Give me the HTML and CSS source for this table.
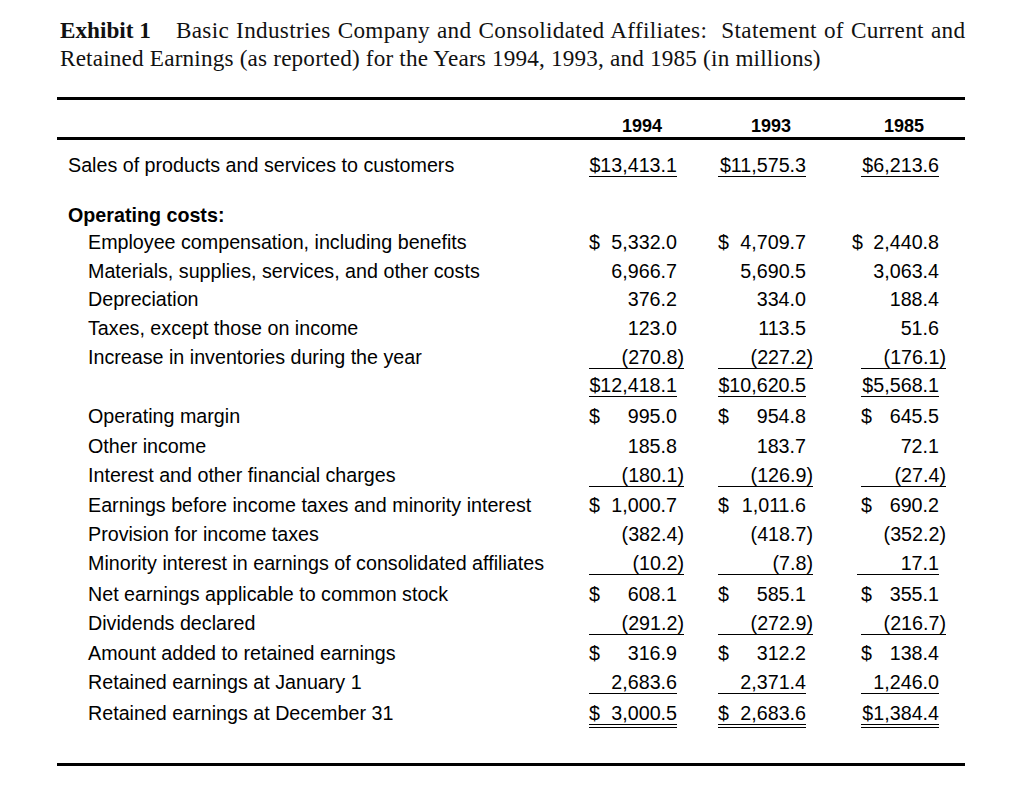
FILE: index.html
```html
<!DOCTYPE html>
<html lang="en">
<head>
<meta charset="utf-8">
<title>Exhibit 1</title>
<link rel="stylesheet" href="styles.css">
</head>
<body>
<div class="page">
  <h1 class="title"><span class="ex">Exhibit 1</span><span class="l1">Basic Industries Company and Consolidated Affiliates:&nbsp; Statement of Current and</span><br><span class="l2">Retained Earnings (as reported) for the Years 1994, 1993, and 1985 (in millions)</span></h1>

  <div class="table">
    <div class="row head">
      <div class="lab"></div>
      <div class="yr">1994</div>
      <div class="yr">1993</div>
      <div class="yr">1985</div>
    </div>

    <div class="body">
      <div class="row h50">
        <div class="lab">Sales of products and services to customers</div>
        <div class="cell c1"><span class="amt pos u"><span class="n">$13,413.1</span></span></div>
        <div class="cell c2"><span class="amt pos u"><span class="n">$11,575.3</span></span></div>
        <div class="cell c3"><span class="amt pos u"><span class="n">$6,213.6</span></span></div>
      </div>

      <div class="row h27">
        <div class="lab sec">Operating costs:</div>
      </div>

      <div class="row h29">
        <div class="lab ind">Employee compensation, including benefits</div>
        <div class="cell c1"><span class="amt pos"><span class="d">$</span><span class="n">5,332.0</span></span></div>
        <div class="cell c2"><span class="amt pos"><span class="d">$</span><span class="n">4,709.7</span></span></div>
        <div class="cell c3"><span class="amt pos"><span class="d out">$</span><span class="n">2,440.8</span></span></div>
      </div>
      <div class="row h28">
        <div class="lab ind">Materials, supplies, services, and other costs</div>
        <div class="cell c1"><span class="amt pos"><span class="n">6,966.7</span></span></div>
        <div class="cell c2"><span class="amt pos"><span class="n">5,690.5</span></span></div>
        <div class="cell c3"><span class="amt pos"><span class="n">3,063.4</span></span></div>
      </div>
      <div class="row h29">
        <div class="lab ind">Depreciation</div>
        <div class="cell c1"><span class="amt pos"><span class="n">376.2</span></span></div>
        <div class="cell c2"><span class="amt pos"><span class="n">334.0</span></span></div>
        <div class="cell c3"><span class="amt pos"><span class="n">188.4</span></span></div>
      </div>
      <div class="row h29">
        <div class="lab ind">Taxes, except those on income</div>
        <div class="cell c1"><span class="amt pos"><span class="n">123.0</span></span></div>
        <div class="cell c2"><span class="amt pos"><span class="n">113.5</span></span></div>
        <div class="cell c3"><span class="amt pos"><span class="n">51.6</span></span></div>
      </div>
      <div class="row h29">
        <div class="lab ind">Increase in inventories during the year</div>
        <div class="cell c1"><span class="amt u"><span class="n">(270.8)</span></span></div>
        <div class="cell c2"><span class="amt u"><span class="n">(227.2)</span></span></div>
        <div class="cell c3"><span class="amt u"><span class="n">(176.1)</span></span></div>
      </div>
      <div class="row h30">
        <div class="lab ind"></div>
        <div class="cell c1"><span class="amt pos u"><span class="n">$12,418.1</span></span></div>
        <div class="cell c2"><span class="amt pos u"><span class="n">$10,620.5</span></span></div>
        <div class="cell c3"><span class="amt pos u"><span class="n">$5,568.1</span></span></div>
      </div>
      <div class="row h30">
        <div class="lab ind">Operating margin</div>
        <div class="cell c1"><span class="amt pos"><span class="d">$</span><span class="n">995.0</span></span></div>
        <div class="cell c2"><span class="amt pos"><span class="d">$</span><span class="n">954.8</span></span></div>
        <div class="cell c3"><span class="amt pos"><span class="d">$</span><span class="n">645.5</span></span></div>
      </div>
      <div class="row h29">
        <div class="lab ind">Other income</div>
        <div class="cell c1"><span class="amt pos"><span class="n">185.8</span></span></div>
        <div class="cell c2"><span class="amt pos"><span class="n">183.7</span></span></div>
        <div class="cell c3"><span class="amt pos"><span class="n">72.1</span></span></div>
      </div>
      <div class="row h30">
        <div class="lab ind">Interest and other financial charges</div>
        <div class="cell c1"><span class="amt u"><span class="n">(180.1)</span></span></div>
        <div class="cell c2"><span class="amt u"><span class="n">(126.9)</span></span></div>
        <div class="cell c3"><span class="amt u"><span class="n">(27.4)</span></span></div>
      </div>
      <div class="row h29">
        <div class="lab ind">Earnings before income taxes and minority interest</div>
        <div class="cell c1"><span class="amt pos"><span class="d">$</span><span class="n">1,000.7</span></span></div>
        <div class="cell c2"><span class="amt pos"><span class="d">$</span><span class="n">1,011.6</span></span></div>
        <div class="cell c3"><span class="amt pos"><span class="d">$</span><span class="n">690.2</span></span></div>
      </div>
      <div class="row h29">
        <div class="lab ind">Provision for income taxes</div>
        <div class="cell c1"><span class="amt"><span class="n">(382.4)</span></span></div>
        <div class="cell c2"><span class="amt"><span class="n">(418.7)</span></span></div>
        <div class="cell c3"><span class="amt"><span class="n">(352.2)</span></span></div>
      </div>
      <div class="row h31">
        <div class="lab ind">Minority interest in earnings of consolidated affiliates</div>
        <div class="cell c1"><span class="amt u"><span class="n">(10.2)</span></span></div>
        <div class="cell c2"><span class="amt u"><span class="n">(7.8)</span></span></div>
        <div class="cell c3"><span class="amt pos u wide"><span class="n">17.1</span></span></div>
      </div>
      <div class="row h29">
        <div class="lab ind">Net earnings applicable to common stock</div>
        <div class="cell c1"><span class="amt pos"><span class="d">$</span><span class="n">608.1</span></span></div>
        <div class="cell c2"><span class="amt pos"><span class="d">$</span><span class="n">585.1</span></span></div>
        <div class="cell c3"><span class="amt pos"><span class="d">$</span><span class="n">355.1</span></span></div>
      </div>
      <div class="row h30">
        <div class="lab ind">Dividends declared</div>
        <div class="cell c1"><span class="amt u"><span class="n">(291.2)</span></span></div>
        <div class="cell c2"><span class="amt u"><span class="n">(272.9)</span></span></div>
        <div class="cell c3"><span class="amt u"><span class="n">(216.7)</span></span></div>
      </div>
      <div class="row h29">
        <div class="lab ind">Amount added to retained earnings</div>
        <div class="cell c1"><span class="amt pos"><span class="d">$</span><span class="n">316.9</span></span></div>
        <div class="cell c2"><span class="amt pos"><span class="d">$</span><span class="n">312.2</span></span></div>
        <div class="cell c3"><span class="amt pos"><span class="d">$</span><span class="n">138.4</span></span></div>
      </div>
      <div class="row h31">
        <div class="lab ind">Retained earnings at January 1</div>
        <div class="cell c1"><span class="amt pos u"><span class="n">2,683.6</span></span></div>
        <div class="cell c2"><span class="amt pos u"><span class="n">2,371.4</span></span></div>
        <div class="cell c3"><span class="amt pos u"><span class="n">1,246.0</span></span></div>
      </div>
      <div class="row hlast">
        <div class="lab ind">Retained earnings at December 31</div>
        <div class="cell c1"><span class="amt pos uu"><span class="d">$</span><span class="n">3,000.5</span></span></div>
        <div class="cell c2"><span class="amt pos uu"><span class="d">$</span><span class="n">2,683.6</span></span></div>
        <div class="cell c3"><span class="amt pos uu"><span class="n">$1,384.4</span></span></div>
      </div>
    </div>
  </div>
</div>
</body>
</html>
```

FILE: styles.css
```css
* {
  box-sizing: border-box;
}

body {
  margin: 0;
  background: #ffffff;
  color: #000000;
}

.page {
  width: 965px;
  padding: 16px 0 0 57px;
}

.title {
  margin: 0 0 25px 3px;
  font-family: "Liberation Serif", "Times New Roman", serif;
  font-size: 23.2px;
  line-height: 28px;
  font-weight: 400;
  letter-spacing: 0.3px;
  white-space: nowrap;
  color: #111;
}

.ex {
  display: inline-block;
  width: 116px;
  font-weight: 700;
  letter-spacing: 0;
}

.l1 {
  word-spacing: 1px;
}

.l2 {
  letter-spacing: 0.18px;
}

.table {
  width: 908px;
  border-top: 3px solid #000;
  border-bottom: 3px solid #000;
  font-family: "Liberation Sans", Arial, sans-serif;
  font-size: 19.7px;
}

.row {
  display: grid;
  grid-template-columns: 532px 95px 129px 133px;
  align-items: baseline;
  padding-top: 3.5px;
}

.head {
  height: 40px;
  padding-top: 0;
  align-items: end;
  border-bottom: 3px solid #000;
}

.yr {
  justify-self: end;
  padding-right: 22px;
  font-size: 18px;
  font-weight: 700;
  line-height: 22px;
}

.body {
  padding-top: 10.75px;
}

.h50 { height: 50px; }
.h27 { height: 27px; }
.h28 { height: 28px; }
.h29 { height: 29px; }
.h30 { height: 30px; }
.h31 { height: 31px; }
.hlast { height: 64.25px; }

.lab {
  line-height: 22px;
  padding-left: 11px;
  white-space: nowrap;
}

.lab.ind {
  padding-left: 31px;
}

.lab.sec {
  font-weight: 700;
}

.cell {
  justify-self: end;
  display: flex;
}

.c1,
.c2 {
  width: 95px;
}

.c3 {
  width: 85px;
}

.amt {
  flex: 1;
  display: flex;
  line-height: 21px;
  white-space: nowrap;
}

.amt.pos {
  margin-right: 7px;
}

.amt.wide {
  margin-left: -4px;
}

.n {
  margin-left: auto;
}

.d.out {
  margin-left: -9px;
}

.u {
  border-bottom: 1px solid #000;
}

.uu {
  border-bottom: 4px double #000;
}
```
